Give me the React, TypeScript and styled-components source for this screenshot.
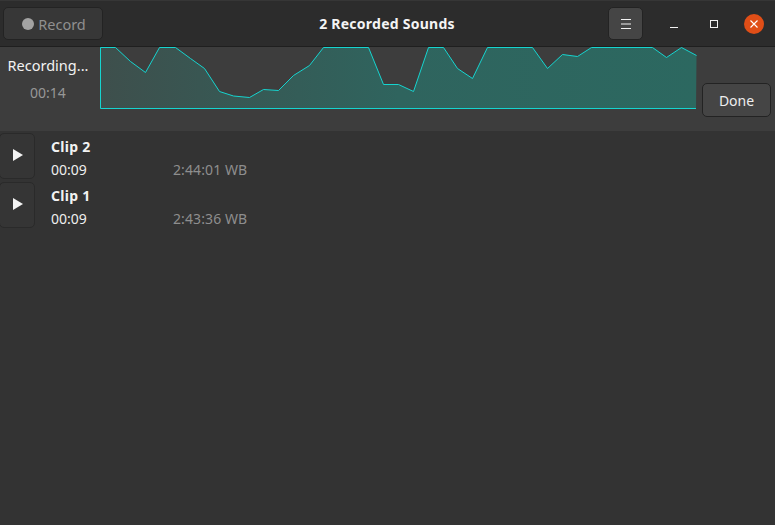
import React from "react";
import styled, { createGlobalStyle } from "styled-components";

const Global = createGlobalStyle`
  html, body { margin: 0; padding: 0; background: #333333; }
  #root { width: 775px; height: 525px; overflow: hidden; }
  * { box-sizing: border-box; }
`;

const Window = styled.div`
  width: 775px;
  height: 525px;
  display: flex;
  flex-direction: column;
  background: #333333;
  font-family: "Noto Sans", "Open Sans", sans-serif;
  font-size: 14px;
  color: #f2f2f2;
  overflow: hidden;
`;

const HeaderBar = styled.header`
  height: 47px;
  flex: none;
  display: grid;
  grid-template-columns: 1fr auto 1fr;
  align-items: center;
  padding: 0 4px 0 3px;
  background: #2c2c2c;
  border-top: 1px solid #363636;
  border-bottom: 1px solid #1f1f1f;
`;

const HeaderEnd = styled.div`
  display: flex;
  align-items: center;
  justify-content: flex-end;
`;

const HeaderStart = styled.div`
  display: flex;
  align-items: center;
`;

const Title = styled.h1`
  margin: 0;
  font-size: 14px;
  font-weight: 700;
  letter-spacing: 0.25px;
  color: #f4f4f4;
`;

const RecordButton = styled.button`
  width: 100px;
  height: 33px;
  display: flex;
  align-items: center;
  justify-content: center;
  gap: 4px;
  padding: 0 0 0 2px;
  border: 1px solid #232323;
  border-radius: 5px;
  background: #373737;
  color: #8f8f8f;
  font: inherit;
  font-size: 14.5px;
`;

const RecordDot = styled.span`
  width: 12px;
  height: 12px;
  border-radius: 50%;
  background: #a3a3a3;
`;

const MenuButton = styled.button`
  width: 35px;
  height: 33px;
  display: flex;
  align-items: center;
  justify-content: center;
  margin-right: 3px;
  padding: 0;
  border: 1px solid #232323;
  border-radius: 5px;
  background: #454545;
  color: #f2f2f2;
`;

const WindowControl = styled.button`
  width: 24px;
  height: 24px;
  display: flex;
  align-items: center;
  justify-content: center;
  margin-left: 16px;
  padding: 0;
  border: 0;
  background: transparent;
  color: #f2f2f2;
  &:first-of-type { margin-left: 0; }
`;

const CloseControl = styled(WindowControl)`
  width: 20px;
  height: 20px;
  margin-left: 18px;
  margin-right: 7px;
  border-radius: 50%;
  background: #e04e17;
`;

const RecordingBar = styled.section`
  height: 84px;
  flex: none;
  display: flex;
  align-items: flex-start;
  background: #3d3d3d;
`;

const Status = styled.div`
  width: 100px;
  flex: none;
  display: flex;
  flex-direction: column;
  align-items: center;
  padding-top: 8px;
`;

const StatusLabel = styled.div`
  font-size: 14.5px;
  line-height: 20px;
  margin-left: -4px;
  color: #f2f2f2;
  white-space: nowrap;
`;

const StatusTime = styled.div`
  margin-top: 8px;
  margin-left: -4px;
  font-size: 14px;
  line-height: 20px;
  color: #979797;
`;

const Wave = styled.svg`
  width: 597px;
  height: 62px;
  flex: none;
  display: block;
`;

const DoneButton = styled.button`
  width: 69px;
  height: 34px;
  margin: 36px 0 0 5px;
  padding: 0;
  border: 1px solid #232323;
  border-radius: 5px;
  background: #454545;
  color: #eeeeee;
  font: inherit;
  font-size: 14px;
`;

const ClipList = styled.div`
  display: flex;
  flex-direction: column;
  gap: 3px;
  padding-top: 2px;
`;

const ClipRow = styled.div`
  height: 46px;
  display: flex;
  align-items: stretch;
`;

const PlayButton = styled.button`
  width: 36px;
  flex: none;
  margin-left: -1px;
  display: flex;
  align-items: center;
  justify-content: center;
  padding: 0 0 2px 1px;
  border: 1px solid #2a2a2a;
  border-radius: 5px;
  background: #353535;
`;

const ClipInfo = styled.div`
  margin-left: 16px;
  padding-top: 2px;
  display: grid;
  grid-template-columns: 122px auto;
  grid-template-rows: 23px 23px;
  align-items: center;
`;

const ClipName = styled.div`
  grid-column: 1 / span 2;
  font-size: 14px;
  font-weight: 700;
  letter-spacing: 0.3px;
  color: #f2f2f2;
`;

const ClipLength = styled.div`
  font-size: 14px;
  color: #eeeeee;
`;

const ClipTime = styled.div`
  font-size: 14px;
  letter-spacing: 0.1px;
  color: #8e8e8e;
`;

const wavePoints: [number, number][] = [
  [100,47],[115,47],[130,61],[145,72],[159,47],[175,47],[190,58],[204,68],[219,91],[233,95.5],[249,97],
  [263,89],[278,90],[293,75],[309,65],[323,47],[368,47],[383,84],[398,84],[413,91],[428,47],[443,47],
  [457,68],[472,78],[487,47],[532,47],[547,68],[562,54],[577,56],[591,47],[652,47],[666,57],[681,47],[696,55],
];

const toSvg = (p: [number, number]) => `${p[0] - 100 + 0.5},${p[1] - 47 + 0.5}`;
const top = wavePoints.map(toSvg).join(" ");

const clips = [
  { name: "Clip 2", length: "00:09", time: "2:44:01 WB" },
  { name: "Clip 1", length: "00:09", time: "2:43:36 WB" },
];

export default function App() {
  return (
    <Window>
      <Global />
      <HeaderBar>
        <HeaderStart>
          <RecordButton>
            <RecordDot />
            Record
          </RecordButton>
        </HeaderStart>
        <Title>2 Recorded Sounds</Title>
        <HeaderEnd>
          <MenuButton aria-label="Menu">
            <svg width="12" height="12" viewBox="0 0 12 12">
              <path d="M1 1.5h10M1 6h10M1 10.5h10" stroke="currentColor" strokeWidth="1" fill="none" />
            </svg>
          </MenuButton>
          <WindowControl aria-label="Minimize">
            <svg width="10" height="10" viewBox="0 0 10 10">
              <path d="M1 8.5h8" stroke="currentColor" strokeWidth="1" fill="none" />
            </svg>
          </WindowControl>
          <WindowControl aria-label="Maximize">
            <svg width="10" height="10" viewBox="0 0 10 10">
              <rect x="1.5" y="1.5" width="7" height="7" stroke="currentColor" strokeWidth="1" fill="none" />
            </svg>
          </WindowControl>
          <CloseControl aria-label="Close">
            <svg width="10" height="10" viewBox="0 0 10 10">
              <path d="M1.5 1.5l7 7M8.5 1.5l-7 7" stroke="#ffffff" strokeWidth="1.1" fill="none" />
            </svg>
          </CloseControl>
        </HeaderEnd>
      </HeaderBar>
      <RecordingBar>
        <Status>
          <StatusLabel>Recording...</StatusLabel>
          <StatusTime>00:14</StatusTime>
        </Status>
        <Wave viewBox="0 0 597 62">
          <defs>
            <linearGradient id="waveFill" x1="0" x2="1" y1="0" y2="0">
              <stop offset="0" stopColor="#3e4f4c" />
              <stop offset="0.5" stopColor="#2f645e" />
              <stop offset="1" stopColor="#2c6860" />
            </linearGradient>
          </defs>
          <polygon points={`0.5,61.5 ${top} 596,61.5`} fill="url(#waveFill)" />
          <polyline points={`596,61.5 0.5,61.5 ${top}`} fill="none" stroke="#16d4cf" strokeWidth="1" />
        </Wave>
        <DoneButton>Done</DoneButton>
      </RecordingBar>
      <ClipList>
        {clips.map((clip) => (
          <ClipRow key={clip.name}>
            <PlayButton aria-label={`Play ${clip.name}`}>
              <svg width="12" height="12" viewBox="0 0 12 12">
                <path d="M1 0L11 6L1 12Z" fill="#f4f4f4" />
              </svg>
            </PlayButton>
            <ClipInfo>
              <ClipName>{clip.name}</ClipName>
              <ClipLength>{clip.length}</ClipLength>
              <ClipTime>{clip.time}</ClipTime>
            </ClipInfo>
          </ClipRow>
        ))}
      </ClipList>
    </Window>
  );
}
